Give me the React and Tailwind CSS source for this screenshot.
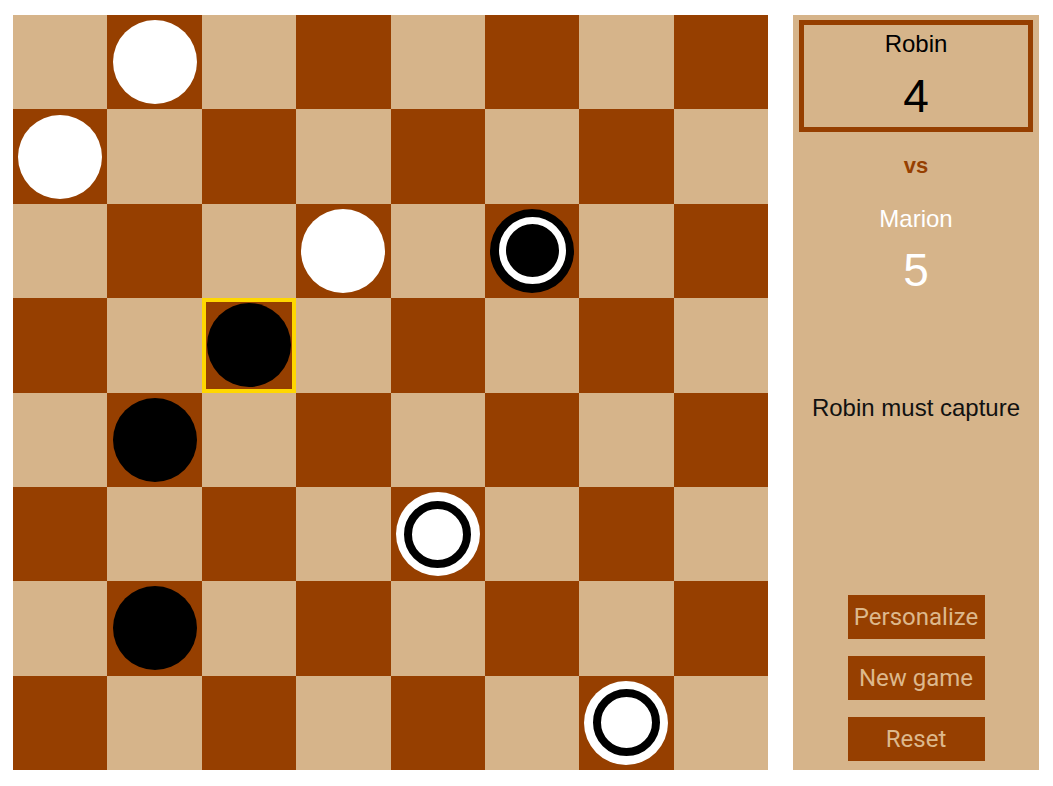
import React from "react";

const LIGHT = "bg-[#D6B48A]";
const DARK = "bg-[#963F00]";

// piece map: "w" white, "b" black, "W" white king, "B" black king
const pieces = {
  "0-1": "w",
  "1-0": "w",
  "2-3": "w",
  "2-5": "B",
  "3-2": "b",
  "4-1": "b",
  "5-4": "W",
  "6-1": "b",
  "7-6": "W",
};

const selected = "3-2";

function Piece({ kind }) {
  if (kind === "w") return <div className="w-[84px] h-[84px] rounded-full bg-white" />;
  if (kind === "b") return <div className="w-[84px] h-[84px] rounded-full bg-black" />;
  if (kind === "W")
    return (
      <div className="w-[84px] h-[84px] rounded-full bg-white flex items-center justify-center">
        <div className="w-[67px] h-[67px] rounded-full border-[8px] border-black" />
      </div>
    );
  return (
    <div className="w-[84px] h-[84px] rounded-full bg-black flex items-center justify-center">
      <div className="w-[67px] h-[67px] rounded-full border-[7px] border-white" />
    </div>
  );
}

function Board() {
  const cells = [];
  for (let r = 0; r < 8; r++) {
    for (let c = 0; c < 8; c++) {
      const key = `${r}-${c}`;
      const dark = (r + c) % 2 === 1;
      const isSel = key === selected;
      cells.push(
        <div
          key={key}
          className={`${dark ? DARK : LIGHT} ${isSel ? "border-4 border-[#FFD700]" : ""} flex items-center justify-center`}
        >
          {pieces[key] && <Piece kind={pieces[key]} />}
        </div>
      );
    }
  }
  return <div className="grid grid-cols-8 grid-rows-8 w-[755px] h-[755px] shrink-0">{cells}</div>;
}

export default function App() {
  return (
    <div className="flex gap-[25px] pt-[15px] pl-[13px] bg-white min-h-[786px]" style={{ fontFamily: '"Liberation Sans", Arial, sans-serif' }}>
      <Board />
      <div className={`w-[246px] h-[755px] ${LIGHT} flex flex-col items-center`}>
        <div className="mt-[5px] w-[234px] h-[112px] border-[5px] border-[#963F00] flex flex-col items-center">
          <div className="pt-[5px] text-[24px] leading-[28px] text-black">Robin</div>
          <div className="mt-[12px] text-[46px] leading-[52px] text-black">4</div>
        </div>
        <div className="mt-[20px] text-[22px] leading-[28px] font-bold text-[#963F00]">vs</div>
        <div className="mt-[25px] text-[24px] leading-[28px] text-white">Marion</div>
        <div className="mt-[11px] text-[46px] leading-[52px] text-white">5</div>
        <div className="mt-[98px] text-[24px] leading-[28px] text-[#111]">Robin must capture</div>
        <div className="mt-auto pb-[9px] flex flex-col gap-[17px]" style={{ fontFamily: "Roboto, sans-serif" }}>
          {["Personalize", "New game", "Reset"].map((t) => (
            <button key={t} className={`w-[137px] h-[44px] ${DARK} text-[#DDB88C] text-[24px] leading-none`}>
              {t}
            </button>
          ))}
        </div>
      </div>
    </div>
  );
}
